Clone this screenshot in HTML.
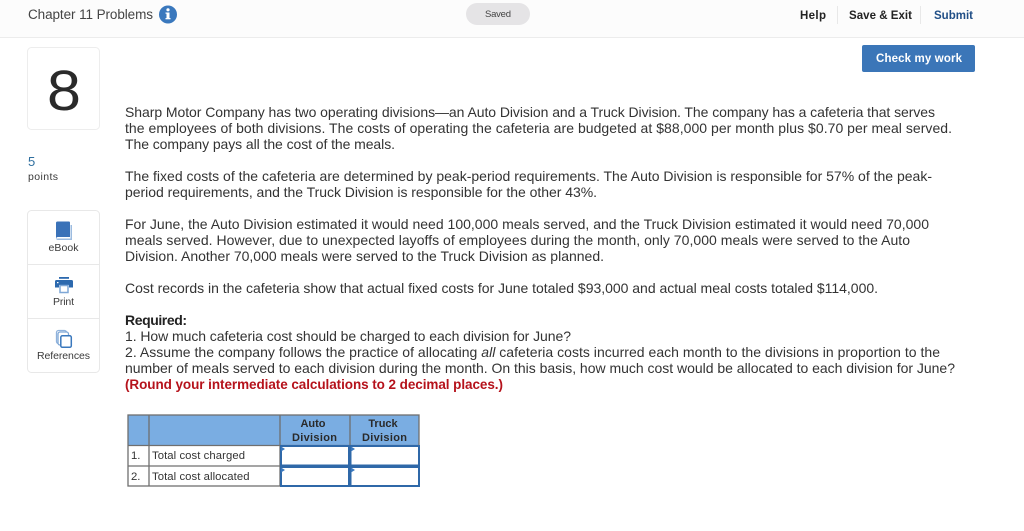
<!DOCTYPE html>
<html><head><meta charset="utf-8">
<style>
html,body{margin:0;padding:0;background:#fff;width:1024px;height:531px;overflow:hidden}
svg{position:absolute;left:0;top:0}
text{font-family:"Liberation Sans",sans-serif}
.b{font-size:14px;fill:#333}
.n{font-size:10.500px;fill:#3a3a3a}
.t{font-size:11.300px;fill:#333}
.h{font-size:11px;font-weight:bold;fill:#2a2a2a}
</style></head><body>
<svg width="1024" height="531" viewBox="0 0 1024 531">
<rect x="0" y="0" width="1024" height="37" fill="#fcfcfc"/>
<rect x="0" y="37" width="1024" height="1" fill="#ececec"/>
<text x="28" y="19" font-size="13.500" fill="#444" textLength="125" lengthAdjust="spacing">Chapter 11 Problems</text>
<circle cx="168" cy="14.500" r="9" fill="#3a78bd"/>
<rect x="166.500" y="12.500" width="3" height="6.500" fill="#fff"/>
<rect x="165.500" y="12.500" width="3" height="1.200" fill="#fff"/>
<rect x="165.500" y="18" width="5" height="1.300" fill="#fff"/>
<circle cx="168" cy="9.800" r="1.600" fill="#fff"/>
<rect x="466" y="3" width="64" height="22" rx="11" fill="#e5e4e6"/>
<text x="485" y="17" font-size="9.500" fill="#444" textLength="26" lengthAdjust="spacing">Saved</text>
<text x="800" y="19" font-size="11.500" font-weight="bold" fill="#222" textLength="26" lengthAdjust="spacing">Help</text>
<rect x="837" y="6" width="1" height="18" fill="#e8e8e8"/>
<text x="849" y="19" font-size="11.500" font-weight="bold" fill="#222" textLength="63" lengthAdjust="spacing">Save &amp; Exit</text>
<rect x="920" y="6" width="1" height="18" fill="#e8e8e8"/>
<text x="934" y="19" font-size="11.500" font-weight="bold" fill="#1f4e86" textLength="39" lengthAdjust="spacing">Submit</text>
<rect x="862" y="45" width="113" height="27" rx="2" fill="#3b76b8"/>
<text x="876" y="62" font-size="11.500" font-weight="bold" fill="#fff" textLength="86" lengthAdjust="spacing">Check my work</text>

<rect x="27.500" y="47.500" width="72" height="82" rx="4" fill="#fff" stroke="#ededed"/>
<text x="0" y="110" font-size="57" fill="#2a2a2a" text-anchor="middle" transform="translate(64 0) scale(1.070 1)">8</text>
<text x="28" y="166" font-size="13" fill="#2f6f9f">5</text>
<text x="28" y="180" class="n" fill="#555" textLength="30" lengthAdjust="spacing">points</text>

<rect x="27.500" y="210.500" width="72" height="162" rx="4" fill="#fff" stroke="#e8e8e8"/>
<rect x="28" y="264" width="71" height="1" fill="#e8e8e8"/>
<rect x="28" y="318" width="71" height="1" fill="#e8e8e8"/>
<!-- book -->
<path d="M56 223a1.500 1.500 0 0 1 1.500-1.500h11.500a1 1 0 0 1 1 1v14.500h-12a2 2 0 0 0-2 1.500z" fill="#3a72b8"/>
<path d="M56 238a2 2 0 0 0 2 2h14v-15h-1.500v13.500h-12.500a2 2 0 0 1-2-.5z" fill="#9dbce0"/>
<text x="63.500" y="251" class="n" text-anchor="middle" textLength="30" lengthAdjust="spacing">eBook</text>
<!-- printer -->
<rect x="59" y="277" width="10" height="1.800" fill="#2c69ae"/>
<path d="M55 281.500a1.500 1.500 0 0 1 1.500-1.500h15a1.500 1.500 0 0 1 1.500 1.500v6h-4v-2.500h-10v2.500h-4z" fill="#2c69ae"/>
<rect x="60" y="285.500" width="8" height="7" fill="#fff" stroke="#7ea7d6" stroke-width="1.500"/>
<rect x="57" y="282" width="1.500" height="1.200" fill="#fff"/>
<text x="63.500" y="305" class="n" text-anchor="middle" textLength="21" lengthAdjust="spacing">Print</text>
<!-- references -->
<rect x="56.500" y="330.500" width="10" height="13" rx="2" fill="#fff" stroke="#8fb2dc" stroke-width="1.300"/>
<rect x="58" y="332" width="10.500" height="13" rx="2" fill="#fff" stroke="#7ea7d6" stroke-width="1.300"/>
<rect x="60.800" y="335.800" width="10.500" height="11.500" rx="1.500" fill="#fff" stroke="#3a78bd" stroke-width="1.500"/>
<text x="63.500" y="359" class="n" text-anchor="middle" textLength="53" lengthAdjust="spacing">References</text>

<text class="b" x="125" y="117" textLength="810" lengthAdjust="spacing">Sharp Motor Company has two operating divisions—an Auto Division and a Truck Division. The company has a cafeteria that serves</text>
<text class="b" x="125" y="133" textLength="827" lengthAdjust="spacing">the employees of both divisions. The costs of operating the cafeteria are budgeted at $88,000 per month plus $0.70 per meal served.</text>
<text class="b" x="125" y="149" textLength="270" lengthAdjust="spacing">The company pays all the cost of the meals.</text>
<text class="b" x="125" y="181" textLength="807" lengthAdjust="spacing">The fixed costs of the cafeteria are determined by peak-period requirements. The Auto Division is responsible for 57% of the peak-</text>
<text class="b" x="125" y="197" textLength="472" lengthAdjust="spacing">period requirements, and the Truck Division is responsible for the other 43%.</text>
<text class="b" x="125" y="229" textLength="804" lengthAdjust="spacing">For June, the Auto Division estimated it would need 100,000 meals served, and the Truck Division estimated it would need 70,000</text>
<text class="b" x="125" y="245" textLength="785" lengthAdjust="spacing">meals served. However, due to unexpected layoffs of employees during the month, only 70,000 meals were served to the Auto</text>
<text class="b" x="125" y="261" textLength="479" lengthAdjust="spacing">Division. Another 70,000 meals were served to the Truck Division as planned.</text>
<text class="b" x="125" y="293" textLength="753" lengthAdjust="spacing">Cost records in the cafeteria show that actual fixed costs for June totaled $93,000 and actual meal costs totaled $114,000.</text>
<text class="b" x="125" y="325" font-weight="bold" style="fill:#222" textLength="62" lengthAdjust="spacing">Required:</text>
<text class="b" x="125" y="341" textLength="446" lengthAdjust="spacing">1. How much cafeteria cost should be charged to each division for June?</text>
<text class="b" x="125" y="357" textLength="815" lengthAdjust="spacing">2. Assume the company follows the practice of allocating <tspan font-style="italic">all</tspan> cafeteria costs incurred each month to the divisions in proportion to the</text>
<text class="b" x="125" y="373" textLength="830" lengthAdjust="spacing">number of meals served to each division during the month. On this basis, how much cost would be allocated to each division for June?</text>
<text class="b" x="125" y="389" font-weight="bold" style="fill:#b5121b;font-size:13.500px" textLength="378" lengthAdjust="spacing">(Round your intermediate calculations to 2 decimal places.)</text>

<!-- table -->
<rect x="128" y="415" width="291" height="71" fill="#fff"/>
<rect x="128" y="415" width="291" height="30" fill="#7aade2"/>
<g fill="none" stroke="#6f6f6f" stroke-width="1.300">
<rect x="128" y="415" width="291" height="71"/>
<path d="M128 445.500H419M128 466H280M149 415V486M280 415V486M350 415V445"/>
</g>
<g fill="#fff" stroke="#2f68a8" stroke-width="2">
<rect x="281" y="446" width="68" height="19.500"/>
<rect x="350.500" y="446" width="68.500" height="19.500"/>
<rect x="281" y="467" width="68" height="19"/>
<rect x="350.500" y="467" width="68.500" height="19"/>
</g>
<g fill="#3a78bd">
<path d="M281 446.500l4 2.500l-4 2.500z"/><path d="M351 446.500l4 2.500l-4 2.500z"/>
<path d="M281 467.500l4 2.500l-4 2.500z"/><path d="M351 467.500l4 2.500l-4 2.500z"/>
</g>
<text class="h" x="313" y="427" text-anchor="middle">Auto</text>
<text class="h" x="314.500" y="441" text-anchor="middle" textLength="45" lengthAdjust="spacing">Division</text>
<text class="h" x="383" y="427" text-anchor="middle">Truck</text>
<text class="h" x="384.500" y="441" text-anchor="middle" textLength="45" lengthAdjust="spacing">Division</text>
<text class="t" x="131" y="459">1.</text>
<text class="t" x="152" y="459" textLength="93" lengthAdjust="spacing">Total cost charged</text>
<text class="t" x="131" y="480">2.</text>
<text class="t" x="152" y="480" textLength="97.500" lengthAdjust="spacing">Total cost allocated</text>
</svg>
</body></html>
